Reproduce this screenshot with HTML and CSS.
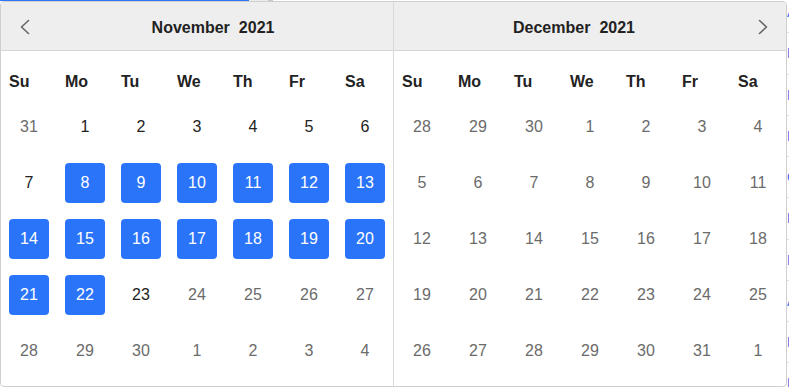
FILE: index.html
```html
<!DOCTYPE html>
<html>
<head>
<meta charset="utf-8">
<link rel="stylesheet" href="styles.css">
</head>
<body>
<div class="page">
  <div class="main">
    <div class="field"><span class="f-blue"></span><span class="f-light"></span><span class="f-gray"></span></div>
    <div class="picker">
      <div class="month">
        <div class="head">
          <button class="nav nav-prev" aria-label="Previous month"><svg width="12" height="16" viewBox="0 0 12 16"><path d="M9.5 1.5 L2.5 8 L9.5 14.5" fill="none" stroke="#666" stroke-width="1.6" stroke-linecap="round" stroke-linejoin="round"/></svg></button>
          <div class="title"><span>November</span><span>2021</span></div>
        </div>
        <div class="body">
          <div class="weekdays"><span>Su</span><span>Mo</span><span>Tu</span><span>We</span><span>Th</span><span>Fr</span><span>Sa</span></div>
          <div class="days">
            <span class="d muted">31</span><span class="d">1</span><span class="d">2</span><span class="d">3</span><span class="d">4</span><span class="d">5</span><span class="d">6</span>
            <span class="d">7</span><span class="d sel">8</span><span class="d sel">9</span><span class="d sel">10</span><span class="d sel">11</span><span class="d sel">12</span><span class="d sel">13</span>
            <span class="d sel">14</span><span class="d sel">15</span><span class="d sel">16</span><span class="d sel">17</span><span class="d sel">18</span><span class="d sel">19</span><span class="d sel">20</span>
            <span class="d sel">21</span><span class="d sel">22</span><span class="d">23</span><span class="d muted">24</span><span class="d muted">25</span><span class="d muted">26</span><span class="d muted">27</span>
            <span class="d muted">28</span><span class="d muted">29</span><span class="d muted">30</span><span class="d muted">1</span><span class="d muted">2</span><span class="d muted">3</span><span class="d muted">4</span>
          </div>
        </div>
      </div>
      <div class="month month-right">
        <div class="head head-right">
          <div class="title"><span>December</span><span>2021</span></div>
          <button class="nav nav-next" aria-label="Next month"><svg width="12" height="16" viewBox="0 0 12 16"><path d="M2.5 1.5 L9.5 8 L2.5 14.5" fill="none" stroke="#666" stroke-width="1.6" stroke-linecap="round" stroke-linejoin="round"/></svg></button>
        </div>
        <div class="body">
          <div class="weekdays"><span>Su</span><span>Mo</span><span>Tu</span><span>We</span><span>Th</span><span>Fr</span><span>Sa</span></div>
          <div class="days">
            <span class="d muted">28</span><span class="d muted">29</span><span class="d muted">30</span><span class="d muted">1</span><span class="d muted">2</span><span class="d muted">3</span><span class="d muted">4</span>
            <span class="d muted">5</span><span class="d muted">6</span><span class="d muted">7</span><span class="d muted">8</span><span class="d muted">9</span><span class="d muted">10</span><span class="d muted">11</span>
            <span class="d muted">12</span><span class="d muted">13</span><span class="d muted">14</span><span class="d muted">15</span><span class="d muted">16</span><span class="d muted">17</span><span class="d muted">18</span>
            <span class="d muted">19</span><span class="d muted">20</span><span class="d muted">21</span><span class="d muted">22</span><span class="d muted">23</span><span class="d muted">24</span><span class="d muted">25</span>
            <span class="d muted">26</span><span class="d muted">27</span><span class="d muted">28</span><span class="d muted">29</span><span class="d muted">30</span><span class="d muted">31</span><span class="d muted">1</span>
          </div>
        </div>
      </div>
    </div>
  </div>
  <ul class="side">
    <li>A</li><li>B</li><li>L</li><li>M</li><li>C</li><li>L</li><li>H</li><li>A</li><li>L</li><li>L</li>
  </ul>
</div>
</body>
</html>
```

FILE: styles.css
```css
html, body {
  margin: 0;
  padding: 0;
  background: #fff;
  overflow: hidden;
}
body {
  font-family: "Liberation Sans", Arial, sans-serif;
  color: #222;
}
.page {
  display: flex;
  height: 387px;
}
.main {
  position: relative;
  width: 787px;
  flex: none;
}
.field {
  display: flex;
  height: 1px;
}
.f-blue { width: 249px; background: #2e78f7; }
.f-light { width: 19px; background: #ececec; }
.f-gray { width: 5px; background: #c8c8c8; }

.picker {
  position: absolute;
  top: 1px;
  left: 0;
  width: 787px;
  height: 386px;
  box-sizing: border-box;
  border: 1px solid #cfcfcf;
  border-radius: 4px;
  background: #fff;
  display: flex;
  overflow: hidden;
}
.month {
  width: 392px;
  flex: none;
  display: flex;
  flex-direction: column;
}
.month + .month {
  border-left: 1px solid #d9d9d9;
}
.head {
  height: 48px;
  background: #eeeeee;
  border-bottom: 1px solid #d6d6d6;
  display: flex;
  align-items: center;
}
.nav {
  width: 32px;
  height: 48px;
  flex: none;
  border: 0;
  padding: 0;
  background: transparent;
  display: flex;
  align-items: center;
  justify-content: center;
}
.nav-prev { padding-left: 15px; padding-top: 1px; }
.nav-next { padding-right: 15px; padding-top: 1px; }
.title {
  flex: 1;
  display: flex;
  justify-content: center;
  gap: 9px;
  padding-top: 3px;
  font-weight: bold;
  font-size: 16px;
  color: #222;
}
.body {
  padding: 9px 8px 0 8px;
}
.weekdays {
  display: grid;
  grid-template-columns: repeat(7, 40px);
  column-gap: 16px;
  height: 40px;
  box-sizing: border-box;
  padding-top: 3px;
  align-items: center;
  font-weight: bold;
  font-size: 16px;
  color: #222;
  margin-bottom: 7px;
}
.days {
  display: grid;
  grid-template-columns: repeat(7, 40px);
  grid-auto-rows: 40px;
  gap: 16px;
}
.d {
  display: flex;
  align-items: center;
  justify-content: center;
  font-size: 16px;
  color: #222;
  border-radius: 4px;
}
.d.muted { color: #6b6b6b; }
.d.sel {
  background: #2a74f9;
  color: #fff;
}
.side {
  list-style: none;
  margin: -8px 0 0 0;
  padding: 0;
  flex: 1;
  font-size: 14px;
  color: #2a6ff0;
}
.side li {
  height: 41.25px;
  box-sizing: border-box;
  border-bottom: 1px solid #e2e2e2;
  display: flex;
  align-items: center;
}
```
